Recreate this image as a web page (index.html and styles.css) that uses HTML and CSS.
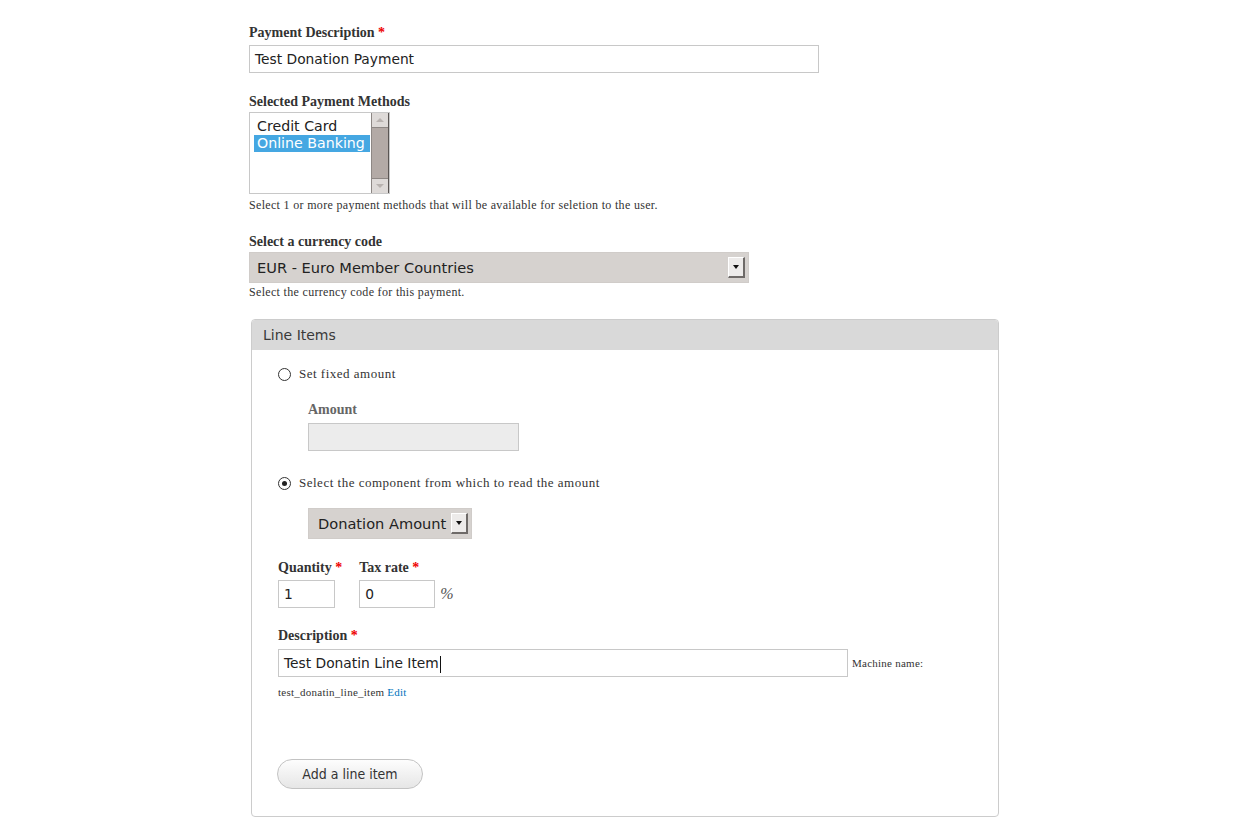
FILE: index.html
```html
<!DOCTYPE html>
<html>
<head>
    <title>Payment settings</title>
    <link rel="stylesheet" href="styles.css">
</head>
<body>
    <div class="form">
        <!-- Payment description -->
        <div class="form-item first">
            <label class="form-label">Payment Description <span class="req">*</span></label>
            <div class="text-input wide">Test Donation Payment</div>
        </div>

        <!-- Payment methods -->
        <div class="form-item methods-item">
            <label class="form-label">Selected Payment Methods</label>
            <div class="listbox">
                <div class="listbox-options">
                    <div class="option">Credit Card</div>
                    <div class="option selected">Online Banking</div>
                </div>
                <div class="scrollbar">
                    <div class="scroll-btn"><span class="tri up"></span></div>
                    <div class="scroll-track"></div>
                    <div class="scroll-btn"><span class="tri down"></span></div>
                </div>
            </div>
            <div class="description">Select 1 or more payment methods that will be available for seletion to the user.</div>
        </div>

        <!-- Currency -->
        <div class="form-item currency-item">
            <label class="form-label">Select a currency code</label>
            <div class="dropdown currency">
                <span class="dropdown-value">EUR - Euro Member Countries</span>
                <span class="dropdown-arrow"><span class="tri down dark"></span></span>
            </div>
            <div class="description">Select the currency code for this payment.</div>
        </div>

        <!-- Line items -->
        <div class="fieldset">
            <div class="legend">Line Items</div>
            <div class="fieldset-body">
                <div class="radio-row">
                    <span class="radio"></span>
                    <span class="radio-label">Set fixed amount</span>
                </div>
                <div class="sub-item amount-item">
                    <label class="form-label disabled">Amount</label>
                    <div class="text-input amount"></div>
                </div>
                <div class="radio-row second">
                    <span class="radio checked"></span>
                    <span class="radio-label">Select the component from which to read the amount</span>
                </div>
                <div class="sub-item component-item">
                    <div class="dropdown component">
                        <span class="dropdown-value">Donation Amount</span>
                        <span class="dropdown-arrow"><span class="tri down dark"></span></span>
                    </div>
                </div>

                <div class="inline-items">
                    <div class="inline-item">
                        <label class="form-label">Quantity <span class="req">*</span></label>
                        <div class="text-input qty">1</div>
                    </div>
                    <div class="inline-item">
                        <label class="form-label">Tax rate <span class="req">*</span></label>
                        <div class="field-with-suffix">
                            <div class="text-input tax">0</div>
                            <span class="suffix">%</span>
                        </div>
                    </div>
                </div>

                <div class="form-item desc-item">
                    <label class="form-label">Description <span class="req">*</span></label>
                    <div class="machine-wrap">
                        <div class="text-input desc">Test Donatin Line Item<span class="caret"></span></div>
                        <span class="machine-name">Machine name:</span>
                        <span class="machine-name">test_donatin_line_item <a href="#" class="edit-link">Edit</a></span>
                    </div>
                </div>

                <button class="pill-button">Add a line item</button>
            </div>
        </div>
    </div>
</body>
</html>
```

FILE: styles.css
```css
body {
    margin: 0;
    background: #fff;
    font-family: "Liberation Serif", "Times New Roman", serif;
    color: #333;
}
.form {
    margin-left: 249px;
    width: 750px;
    padding-top: 25px;
}
.form-item {
    margin-top: 20px;
}
.form-item.first {
    margin-top: 0;
}
.form-label {
    display: block;
    font-size: 14px;
    line-height: 16px;
    font-weight: bold;
    color: #333;
    margin-bottom: 4px;
}
.methods-item {
    margin-top: 21px;
}
.methods-item .form-label {
    margin-bottom: 2px;
}
.currency-item {
    margin-top: 22px;
}
.currency-item .form-label {
    margin-bottom: 2px;
}
.form-label.disabled {
    color: #666;
}
.req {
    color: #e00;
}
.text-input {
    box-sizing: border-box;
    height: 28px;
    border: 1px solid #c8c8c8;
    background: #fff;
    font-family: "DejaVu Sans", sans-serif;
    font-size: 13.8px;
    line-height: 26px;
    padding: 0 5px;
    color: #222;
    white-space: nowrap;
}
.text-input.wide {
    width: 570px;
}
.description {
    font-size: 12px;
    line-height: 14px;
    letter-spacing: 0.32px;
    margin-top: 4px;
    color: #333;
}
.currency-item .description {
    margin-top: 2px;
}

/* multi select */
.listbox {
    box-sizing: border-box;
    display: flex;
    width: 141px;
    height: 82px;
    border: 1px solid #c8c8c8;
    background: #fff;
}
.listbox-options {
    flex: 1;
    min-width: 0;
    padding: 5px 0 0 4px;
    font-family: "DejaVu Sans", sans-serif;
    font-size: 14.2px;
}
.option {
    line-height: 17px;
    padding: 0 5px 0 3px;
    white-space: nowrap;
    color: #222;
}
.option.selected {
    background: #45a7e2;
    color: #fff;
    display: inline-block;
}
.scrollbar {
    width: 16px;
    display: flex;
    flex-direction: column;
    border-left: 1px solid #8d8784;
    border-right: 1px solid #5a5553;
    background: #b3aaa6;
}
.scroll-btn {
    height: 14px;
    background: #dedad8;
    border-bottom: 1px solid #8d8784;
    display: flex;
    align-items: center;
    justify-content: center;
}
.scroll-btn:last-child {
    border-bottom: none;
    border-top: 1px solid #8d8784;
}
.scroll-track {
    flex: 1;
}
.tri {
    width: 0;
    height: 0;
    border-left: 4px solid transparent;
    border-right: 4px solid transparent;
}
.tri.up {
    border-bottom: 4px solid #b8b2af;
}
.tri.down {
    border-top: 4px solid #b8b2af;
}
.tri.down.dark {
    border-left-width: 3px;
    border-right-width: 3px;
    border-top: 4px solid #111;
}

/* dropdowns */
.dropdown {
    box-sizing: border-box;
    display: flex;
    align-items: center;
    justify-content: space-between;
    height: 31px;
    background: #d6d2cf;
    border: 1px solid #d0ccc9;
    font-family: "DejaVu Sans", sans-serif;
    font-size: 14.6px;
    color: #222;
    padding: 0 3px 0 7px;
}
.dropdown.currency {
    width: 500px;
}
.dropdown.component {
    width: 164px;
    padding-left: 9px;
}
.dropdown-arrow {
    box-sizing: border-box;
    width: 17px;
    height: 21px;
    background: #edebea;
    border-top: 1px solid #fff;
    border-left: 1px solid #fff;
    border-right: 2px solid #6e6a68;
    border-bottom: 2px solid #6e6a68;
    display: flex;
    align-items: center;
    justify-content: center;
}

/* fieldset */
.fieldset {
    margin: 20px 0 0 2px;
    width: 748px;
    box-sizing: border-box;
    border: 1px solid #ccc;
    border-radius: 4px;
    overflow: hidden;
}
.legend {
    height: 30px;
    line-height: 30px;
    background: #d9d9d9;
    padding-left: 11px;
    font-family: "DejaVu Sans", sans-serif;
    font-size: 14px;
    color: #3a3a3a;
}
.fieldset-body {
    padding: 16px 26px 27px 26px;
}
.radio-row {
    display: flex;
    align-items: center;
    height: 16px;
}
.radio-row.second {
    margin-top: 24px;
}
.radio {
    box-sizing: border-box;
    width: 13px;
    height: 13px;
    border: 1px solid #333;
    border-radius: 50%;
    margin-right: 8px;
    display: flex;
    align-items: center;
    justify-content: center;
}
.radio.checked::after {
    content: "";
    width: 5px;
    height: 5px;
    border-radius: 50%;
    background: #222;
}
.radio-label {
    font-size: 13px;
    letter-spacing: 0.5px;
    color: #333;
}
.sub-item {
    margin-left: 30px;
}
.amount-item {
    margin-top: 20px;
}
.amount-item .form-label {
    margin-bottom: 5px;
}
.text-input.amount {
    width: 211px;
    background: #ececec;
}
.component-item {
    margin-top: 17px;
}

.inline-items {
    display: flex;
    gap: 17px;
    margin-top: 21px;
}
.text-input.qty {
    width: 57px;
}
.field-with-suffix {
    display: flex;
    align-items: center;
    gap: 5px;
}
.text-input.tax {
    width: 76px;
}
.suffix {
    font-size: 16px;
    font-style: italic;
    color: #555;
}

.desc-item {
    margin-top: 20px;
}
.desc-item .form-label {
    margin-bottom: 4px;
}
.machine-wrap {
    line-height: 27px;
}
.text-input.desc {
    display: inline-block;
    vertical-align: middle;
    width: 570px;
}
.caret {
    display: inline-block;
    width: 1px;
    height: 17px;
    background: #111;
    vertical-align: middle;
    margin-left: 1px;
}
.machine-name {
    font-size: 11px;
    letter-spacing: 0.25px;
    white-space: nowrap;
    color: #333;
}
.edit-link {
    color: #0074bd;
    text-decoration: none;
}

.pill-button {
    display: block;
    margin-top: 53px;
    width: 146px;
    height: 30px;
    border: 1px solid #c3c3c3;
    border-radius: 15px;
    background: linear-gradient(#fdfdfd, #e6e6e6);
    font-family: "DejaVu Sans", sans-serif;
    font-stretch: condensed;
    font-size: 14px;
    color: #333;
    margin-left: -1px;
    padding: 0;
}
```
